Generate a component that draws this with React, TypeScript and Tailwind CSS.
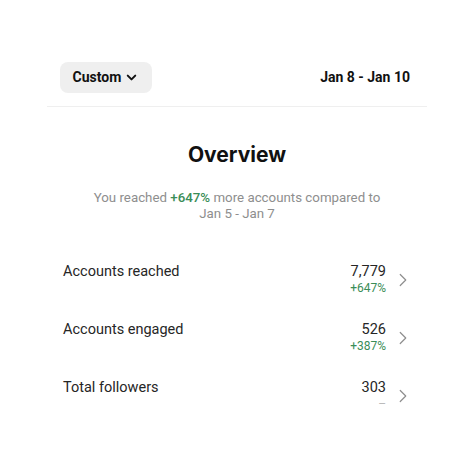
import { ChevronDown, ChevronRight } from "lucide-react";

const ROWS = [
  { label: "Accounts reached", value: "7,779", delta: "+647%" },
  { label: "Accounts engaged", value: "526", delta: "+387%" },
  { label: "Total followers", value: "303", delta: "–" },
];

export default function App() {
  return (
    <div className="h-[474px] w-[474px] bg-white font-['Roboto',sans-serif] text-[#111]">
      {/* header */}
      <div className="mx-[47px] flex items-center justify-between border-b border-[#efefef] pb-[13px] pl-[13px] pr-[17px] pt-[62px]">
        <button className="flex h-[31px] w-[92px] items-center justify-center gap-[3px] rounded-lg bg-[#efefef] text-[14px] font-bold">
          Custom
          <ChevronDown size={15} strokeWidth={3.2} />
        </button>
        <span className="text-[14px] font-bold">Jan 8 - Jan 10</span>
      </div>

      {/* overview */}
      <div className="flex flex-col items-center pt-[34px]">
        <h1 className="font-['Inter',sans-serif] text-[21px] font-bold leading-[28px]">Overview</h1>
        <p className="mt-[21px] w-[300px] text-center text-[13.3px] leading-[16px] text-[#8e8e8e]">
          You reached <span className="font-medium text-[#3a8d57]">+647%</span> more accounts compared to Jan 5 - Jan 7
        </p>
      </div>

      {/* metrics */}
      <div className="mt-[41px] flex flex-col gap-[25px] pl-[63px] pr-[60px]">
        {ROWS.map((r) => (
          <div key={r.label} className="flex items-start justify-between">
            <span className="text-[14.5px] leading-[18px] text-[#262626]">{r.label}</span>
            <div className="flex items-center gap-[6px]">
              <div className="flex flex-col items-end">
                <span className="text-[14.5px] leading-[18px] text-[#262626]">{r.value}</span>
                <span className={`text-[12px] leading-[15px] ${r.delta === "–" ? "text-[#bbb]" : "text-[#3a8d57]"}`}>
                  {r.delta}
                </span>
              </div>
              <ChevronRight size={22} strokeWidth={1.3} className="text-[#8e8e8e]" />
            </div>
          </div>
        ))}
      </div>
    </div>
  );
}
